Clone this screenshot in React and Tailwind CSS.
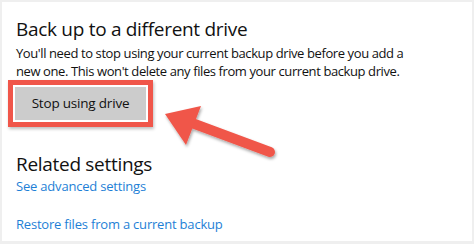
export default function App() {
  return (
    <div className="w-[474px] h-[244px] bg-[#efefef] pt-[2px] pl-[2px] pr-[2px] pb-[3px]" style={{ fontFamily: '"Open Sans", "Noto Sans", sans-serif' }}>
      <div className="relative h-full bg-white pl-[14px] pt-[14px] text-[#111]">
        <h2 className="text-[19px] leading-[26px] tracking-[-0.3px]">Back up to a different drive</h2>
        <p className="text-[13px] leading-[18px] mt-[2px] tracking-[-0.4px] whitespace-nowrap">
          You'll need to stop using your current backup drive before you add a
          <br />
          new one. This won't delete any files from your current backup drive.
        </p>

        <div className="mt-0 -ml-[8px] w-[145px] border-[5px] border-[#f0564a] p-[2px] shadow-[1px_2px_3px_rgba(0,0,0,0.25)]">
          <button className="w-full h-[33px] bg-[#cccccc] text-[13.5px] tracking-[-0.2px] text-[#111]">Stop using drive</button>
        </div>

        <h2 className="text-[19px] leading-[26px] tracking-[-0.3px] mt-[24px]">Related settings</h2>
        <div className="text-[13px] leading-[18px] tracking-[-0.2px] text-[#1e7fd6]">
          <a className="block">See advanced settings</a>
          <a className="block mt-[20px]">Restore files from a current backup</a>
        </div>

        <svg className="absolute left-[160px] top-[94px]" width="120" height="72" viewBox="0 0 120 72">
          <defs>
            <filter id="sh" x="-20%" y="-20%" width="140%" height="140%">
              <feDropShadow dx="1" dy="2" stdDeviation="1.5" floodColor="#000" floodOpacity="0.35" />
            </filter>
          </defs>
          <g filter="url(#sh)">
            <line x1="30" y1="27" x2="108" y2="56" stroke="#f0564a" strokeWidth="10" strokeLinecap="round" />
            <polygon points="3,18 39,10 24,49" fill="#f0564a" />
          </g>
        </svg>
      </div>
    </div>
  );
}
